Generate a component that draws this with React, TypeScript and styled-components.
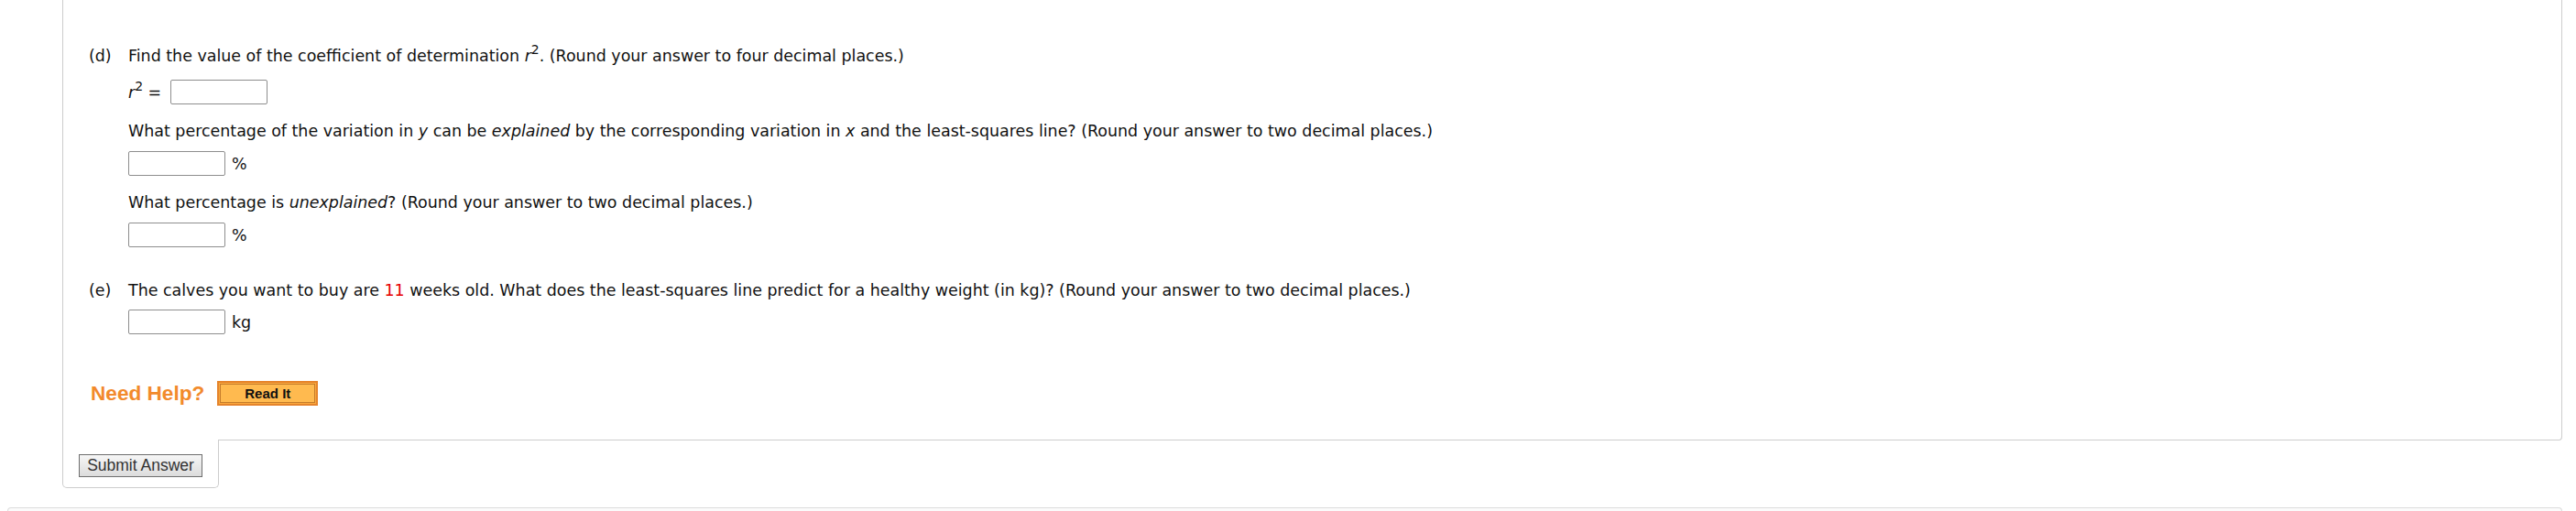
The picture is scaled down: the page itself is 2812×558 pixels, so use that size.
import styled, { createGlobalStyle } from 'styled-components';

const GlobalStyle = createGlobalStyle`
  html, body {
    margin: 0;
    padding: 0;
    background: #fff;
  }
  body {
    font-family: "DejaVu Sans", Verdana, sans-serif;
    color: #111;
  }
`;

const Page = styled.div`
  padding: 0 15px 0 8px;
`;

const QuestionCard = styled.section`
  margin-left: 60px;
  border: 1px solid #cdcdcd;
  border-top: none;
  border-bottom-right-radius: 4px;
  padding: 51px 0 37px 28px;
`;

const Part = styled.div<{ $gap?: number }>`
  display: grid;
  grid-template-columns: 43px 1fr;
  margin-top: ${(p) => p.$gap ?? 0}px;
  font-size: 17.45px;
  line-height: 20px;
`;

const PartLabel = styled.div``;

const PartBody = styled.div`
  display: flex;
  flex-direction: column;
  align-items: flex-start;
`;

const Prompt = styled.p<{ $gap?: number }>`
  margin: ${(p) => p.$gap ?? 0}px 0 0;
`;

const Var = styled.i`
  font-style: italic;
`;

const Sup = styled.sup`
  font-size: 0.8em;
  line-height: 0;
  vertical-align: 0.6em;
`;

const Given = styled.span`
  color: #e60000;
`;

const AnswerRow = styled.div<{ $gap?: number }>`
  display: flex;
  align-items: center;
  gap: 7px;
  margin-top: ${(p) => p.$gap ?? 0}px;
  height: 27px;
`;

const Symbol = styled.span`
  margin-right: 3px;
`;

const AnswerInput = styled.input`
  box-sizing: border-box;
  width: 106px;
  height: 27px;
  border: 1px solid #8e8e8e;
  border-radius: 2px;
  background: #fff;
  padding: 0 4px;
  font: inherit;
`;

const HelpRow = styled.div`
  display: flex;
  align-items: center;
  gap: 14px;
  margin: 51px 0 0 2px;
  height: 27px;
`;

const NeedHelp = styled.span`
  font-family: "Liberation Sans", Arial, sans-serif;
  font-weight: bold;
  font-size: 22.6px;
  color: #f28a2c;
`;

const ReadItButton = styled.button`
  box-sizing: border-box;
  width: 110px;
  height: 27px;
  border: 2px solid #e5842b;
  background: #ffba4f;
  box-shadow: inset 0 0 0 1px #f9a83d, inset 0 0 0 2px #c47a2a;
  font-family: "Liberation Sans", Arial, sans-serif;
  font-weight: bold;
  font-size: 15px;
  color: #111;
  padding: 0;
  cursor: pointer;
`;

const SubmitTab = styled.div`
  box-sizing: border-box;
  margin: -1px 0 0 60px;
  width: 171px;
  padding: 16px 0 11px 17px;
  border: 1px solid #cdcdcd;
  border-top: none;
  border-radius: 0 0 5px 5px;
  background: #fff;
`;

const SubmitButton = styled.button`
  box-sizing: border-box;
  width: 135px;
  height: 25px;
  border: 1px solid #6e6e6e;
  background: linear-gradient(#f6f6f6, #dcdcdc);
  font-family: "Liberation Sans", Arial, sans-serif;
  font-size: 17.5px;
  color: #333;
  padding: 0;
  cursor: pointer;
`;

const NextCard = styled.section`
  margin-top: 21px;
  height: 3px;
  border: 1px solid #dcdcdc;
  border-bottom: none;
  border-radius: 5px 5px 0 0;
  background: #fbfbfb;
`;

export default function App() {
  return (
    <>
      <GlobalStyle />
      <Page>
        <QuestionCard>
          <Part>
            <PartLabel>(d)</PartLabel>
            <PartBody>
              <Prompt>
                Find the value of the coefficient of determination <Var>r</Var>
                <Sup>2</Sup>. (Round your answer to four decimal places.)
              </Prompt>
              <AnswerRow $gap={16}>
                <Symbol>
                  <Var>r</Var>
                  <Sup>2</Sup> =
                </Symbol>
                <AnswerInput type="text" />
              </AnswerRow>
              <Prompt $gap={19}>
                What percentage of the variation in <Var>y</Var> can be <Var>explained</Var> by the
                corresponding variation in <Var>x</Var> and the least-squares line? (Round your answer
                to two decimal places.)
              </Prompt>
              <AnswerRow $gap={12}>
                <AnswerInput type="text" />
                <span>%</span>
              </AnswerRow>
              <Prompt $gap={19}>
                What percentage is <Var>unexplained</Var>? (Round your answer to two decimal places.)
              </Prompt>
              <AnswerRow $gap={12}>
                <AnswerInput type="text" />
                <span>%</span>
              </AnswerRow>
            </PartBody>
          </Part>

          <Part $gap={37}>
            <PartLabel>(e)</PartLabel>
            <PartBody>
              <Prompt>
                The calves you want to buy are <Given>11</Given> weeks old. What does the
                least-squares line predict for a healthy weight (in kg)? (Round your answer to two
                decimal places.)
              </Prompt>
              <AnswerRow $gap={11}>
                <AnswerInput type="text" />
                <span>kg</span>
              </AnswerRow>
            </PartBody>
          </Part>

          <HelpRow>
            <NeedHelp>Need Help?</NeedHelp>
            <ReadItButton type="button">Read It</ReadItButton>
          </HelpRow>
        </QuestionCard>

        <SubmitTab>
          <SubmitButton type="button">Submit Answer</SubmitButton>
        </SubmitTab>

        <NextCard />
      </Page>
    </>
  );
}
